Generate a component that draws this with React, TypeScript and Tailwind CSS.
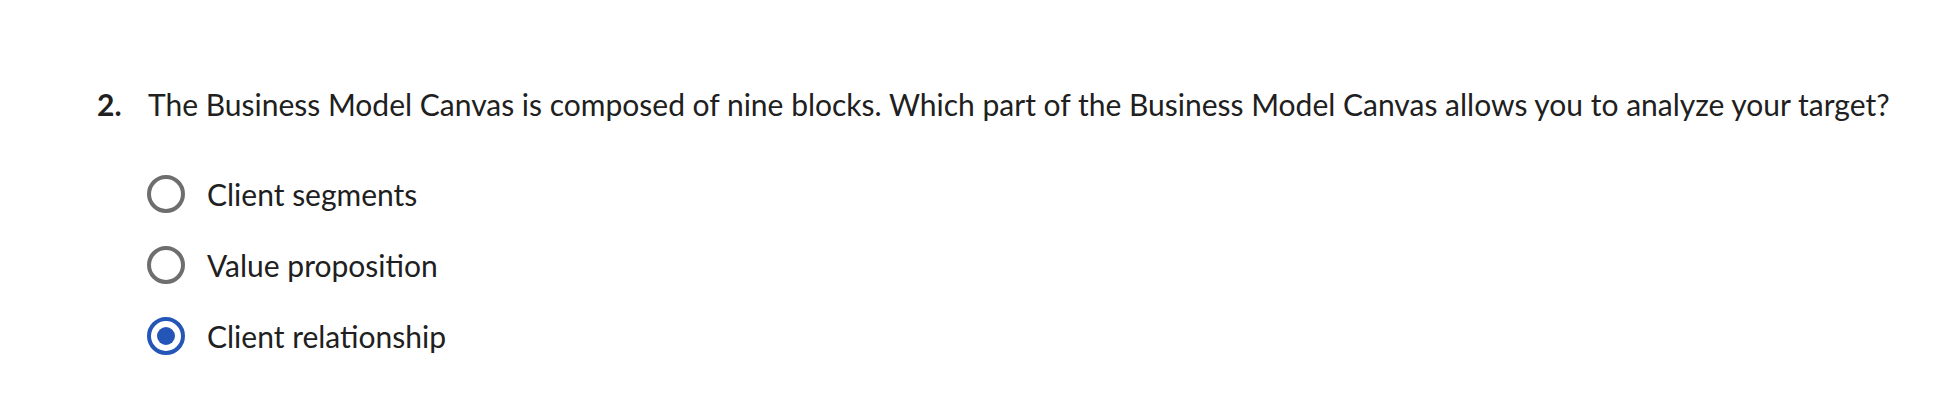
import React from "react";

function Radio({ checked }: { checked?: boolean }) {
  return checked ? (
    <span className="flex h-[38px] w-[38px] shrink-0 items-center justify-center rounded-full border-[4px] border-[#2456b8] bg-white">
      <span className="h-[18px] w-[18px] rounded-full bg-[#2456b8]" />
    </span>
  ) : (
    <span className="h-[38px] w-[38px] shrink-0 rounded-full border-[4px] border-[#6e6e6e] bg-white" />
  );
}

export default function App() {
  const options = [
    { label: "Client segments", checked: false },
    { label: "Value proposition", checked: false },
    { label: "Client relationship", checked: true },
  ];
  return (
    <div
      className="h-[406px] w-[1941px] bg-white text-[#202020]"
      style={{ fontFamily: "Lato, 'Noto Sans', sans-serif" }}
    >
      <div className="pt-[86px] pl-[97px]">
        <div className="flex items-baseline text-[30px] leading-[36px]">
          <span className="w-[51px] shrink-0 font-bold">2.</span>
          <span>
            The Business Model Canvas is composed of nine blocks. Which part of the Business Model Canvas allows you to analyze your target?
          </span>
        </div>
        <div className="mt-[53px] flex flex-col gap-[33px] pl-[50px]">
          {options.map((o) => (
            <label key={o.label} className="flex items-center gap-[22px] text-[30px] leading-[38px]">
              <Radio checked={o.checked} />
              <span>{o.label}</span>
            </label>
          ))}
        </div>
      </div>
    </div>
  );
}
